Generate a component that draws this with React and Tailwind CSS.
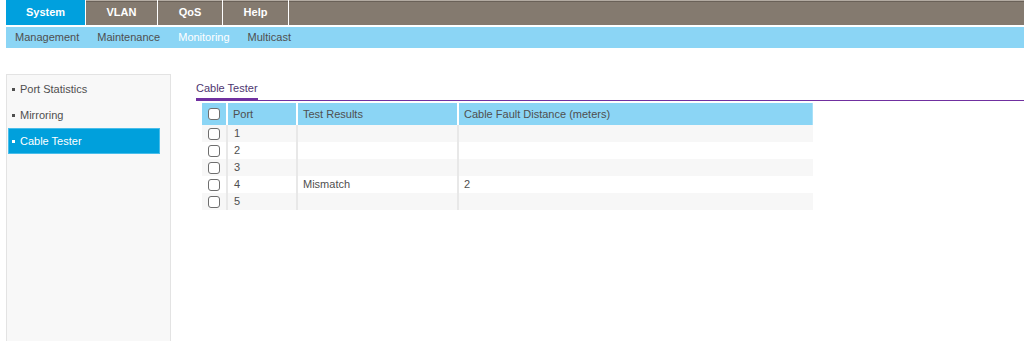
import React from "react";

const topTabs = [
  { label: "System", w: "w-[80px]", active: true },
  { label: "VLAN", w: "w-[72px]" },
  { label: "QoS", w: "w-[65px]" },
  { label: "Help", w: "w-[66px]" },
];

const subTabs = ["Management", "Maintenance", "Monitoring", "Multicast"];

const sideItems = ["Port Statistics", "Mirroring", "Cable Tester"];

const rows = [
  { port: "1", result: "", distance: "" },
  { port: "2", result: "", distance: "" },
  { port: "3", result: "", distance: "" },
  { port: "4", result: "Mismatch", distance: "2" },
  { port: "5", result: "", distance: "" },
];

function Box() {
  return (
    <span className="block w-[12px] h-[12px] rounded-[3px] border border-[#6e6e6e] bg-white" />
  );
}

export default function App() {
  return (
    <div
      className="w-full h-[341px] overflow-hidden bg-white text-[11px] text-[#4f4f4f]"
      style={{ fontFamily: '"Liberation Sans", Arial, sans-serif' }}
    >
      <div className="pl-[6px]">
        <div className="flex h-[25px]">
          {topTabs.map((t) => (
            <div
              key={t.label}
              className={
                t.w +
                " flex items-center justify-center border-r border-white text-white font-bold " +
                (t.active
                  ? "bg-[#00a0de]"
                  : "bg-[#847a6f] shadow-[inset_0_1px_0_#b3aba2,inset_0_2px_0_#6a6158]")
              }
            >
              {t.label}
            </div>
          ))}
          <div className="flex-1 bg-[#847a6f] shadow-[inset_0_1px_0_#b3aba2,inset_0_2px_0_#6a6158]" />
        </div>
        <div className="mt-[2px] h-[21px] flex items-center bg-[#8bd5f5]">
          {subTabs.map((s) => (
            <span
              key={s}
              className={
                "px-[9px] " + (s === "Monitoring" ? "text-white" : "text-[#4f4f4f]")
              }
            >
              {s}
            </span>
          ))}
        </div>
      </div>

      <div className="flex items-start pl-[6px] mt-[26px]">
        <div className="w-[165px] h-[300px] border border-[#e3e3e3] bg-[#f8f8f8] pt-px">
          {sideItems.map((item) => {
            const active = item === "Cable Tester";
            return (
              <div
                key={item}
                className={
                  "ml-px w-[152px] h-[26px] flex items-center pl-[3px] border " +
                  (active
                    ? "bg-[#00a0dc] border-[#48bdea] text-white"
                    : "border-transparent text-[#4f4f4f]")
                }
              >
                <span className="w-[3px] h-[3px] bg-current mr-[5px]" />
                {item}
              </div>
            );
          })}
        </div>

        <div className="flex-1 ml-[25px] pt-[8px]">
          <div className="flex border-b border-[#7030a0]">
            <span className="leading-[13px] pb-[3px] border-b-2 border-[#7030a0] text-[#4e3670]">
              Cable Tester
            </span>
          </div>

          <div className="ml-[6px] mt-[2px] w-[611px]">
            <div className="flex h-[22px] bg-[#8bd5f5]">
              <div className="w-[26px] border-r-2 border-white flex items-center justify-center">
                <Box />
              </div>
              <div className="w-[70px] border-r-2 border-white flex items-center pl-[5px]">
                Port
              </div>
              <div className="w-[161px] border-r-2 border-white flex items-center pl-[5px]">
                Test Results
              </div>
              <div className="flex-1 flex items-center pl-[5px] border-r border-[#a8e0f8]">
                Cable Fault Distance (meters)
              </div>
            </div>
            {rows.map((r, i) => (
              <div
                key={r.port}
                className={
                  "flex h-[17px] " + (i % 2 === 0 ? "bg-[#f7f7f7]" : "bg-white")
                }
              >
                <div className="w-[26px] border-r-2 border-[#e8e8e8] flex items-center justify-center">
                  <Box />
                </div>
                <div className="w-[70px] border-r-2 border-[#e8e8e8] flex items-center pl-[6px]">
                  {r.port}
                </div>
                <div className="w-[161px] border-r-2 border-[#e8e8e8] flex items-center pl-[5px]">
                  {r.result}
                </div>
                <div className="flex-1 flex items-center pl-[5px]">{r.distance}</div>
              </div>
            ))}
          </div>
        </div>
      </div>
    </div>
  );
}
